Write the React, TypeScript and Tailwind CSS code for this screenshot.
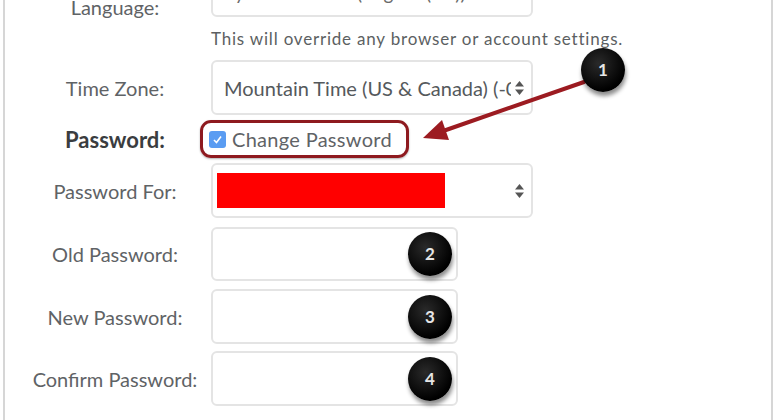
import React from 'react';

// numbered callout badge used on the screenshot
function Callout({ n, className }: { n: number; className: string }) {
  return (
    <div
      className={`absolute flex h-[44px] w-[44px] items-center justify-center rounded-full bg-[radial-gradient(circle_at_40%_35%,#2a2a2a,#000_70%)] text-[17px] font-bold text-[#e6e6e6] shadow-[1px_4px_4px_rgba(0,0,0,0.45)] ${className}`}
    >
      {n}
    </div>
  );
}

function SelectArrows() {
  return (
    <svg width="9" height="14" viewBox="0 0 9 14" className="shrink-0">
      <path d="M4.5 0 L9 5.5 H0 Z" fill="#555" />
      <path d="M4.5 14 L9 8.5 H0 Z" fill="#555" />
    </svg>
  );
}

export default function App() {
  const label = 'ml-[25px] w-[170px] shrink-0 text-center text-[20px] text-[#5f6366]';
  const box = 'ml-[11px] rounded-[6px] border-2 border-[#e4e4e4] bg-white';

  return (
    <div className="relative h-[420px] w-[776px] overflow-hidden bg-white font-['Lato','Noto_Sans',sans-serif]">
      <div className="mx-[3px] flex h-full flex-col border-x-2 border-[#d6d6d6]">
        <div className="-mt-[38px] flex flex-col">
          {/* Language */}
          <div className="flex h-[55px] items-end">
            <div className={`${label} -mb-[5px]`}>Language:</div>
            <div className={`${box} flex h-[55px] w-[322px] items-center overflow-hidden whitespace-nowrap px-[12px] pt-[7px] text-[19px] text-[#6a6a6a]`}>
              System Default (English (US))
            </div>
          </div>

          {/* help text */}
          <div className="mt-[11px] flex h-[22px] items-center">
            <div className="ml-[206px] whitespace-nowrap text-[17px] tracking-[0.8px] text-[#5c5f62]">
              This will override any browser or account settings.
            </div>
          </div>

          {/* Time zone */}
          <div className="mt-[10px] flex h-[55px] items-center">
            <div className={label}>Time Zone:</div>
            <div className={`${box} flex h-[55px] w-[322px] items-center gap-[4px] pl-[11px] pr-[7px]`}>
              <span className="min-w-0 flex-1 overflow-hidden whitespace-nowrap text-[20px] text-[#55595c]">
                Mountain Time (US &amp; Canada) (-07:00)
              </span>
              <SelectArrows />
            </div>
          </div>

          {/* Password */}
          <div className="mt-[5px] flex h-[38px] items-center">
            <div className="ml-[25px] w-[170px] shrink-0 text-center text-[22px] font-bold text-[#3a3d40]">
              Password:
            </div>
            <div className="flex h-[38px] items-center gap-[6px] rounded-[11px] border-[3px] border-[#8e1a1f] pl-[6px] pr-[14px] shadow-[0_1px_2px_rgba(0,0,0,0.3)]">
              <span className="flex h-[17px] w-[17px] items-center justify-center rounded-[3px] bg-[#5a9cf2]">
                <svg width="11" height="11" viewBox="0 0 11 11">
                  <path d="M2 6 L4.5 8.5 L9 2.5" stroke="#fff" strokeWidth="1.6" fill="none" />
                </svg>
              </span>
              <span className="whitespace-nowrap text-[20px] tracking-[0.3px] text-[#5f6366]">Change Password</span>
            </div>
          </div>

          {/* Password for */}
          <div className="mt-[5px] flex h-[55px] items-center">
            <div className={label}>Password For:</div>
            <div className={`${box} flex h-[55px] w-[322px] items-center pl-[4px] pr-[7px]`}>
              <div className="h-[35px] w-[228px] bg-[#ff0000]" />
              <div className="flex-1" />
              <SelectArrows />
            </div>
          </div>

          {/* Old / new / confirm */}
          {[
            { t: 'Old Password:', n: 2, mt: 'mt-[9px]', h: 'h-[54px]' },
            { t: 'New Password:', n: 3, mt: 'mt-[8px]', h: 'h-[55px]' },
            { t: 'Confirm Password:', n: 4, mt: 'mt-[7px]', h: 'h-[55px]' },
          ].map((r) => (
            <div key={r.n} className={`${r.mt} flex ${r.h} items-center`}>
              <div className={label}>{r.t}</div>
              <div className={`${box} relative h-full w-[247px]`}>
                <Callout n={r.n} className="left-[195px] top-1/2 -translate-y-1/2" />
              </div>
            </div>
          ))}
        </div>
      </div>

      {/* callout 1 and its arrow */}
      <svg className="absolute left-0 top-0" width="776" height="420" viewBox="0 0 776 420">
        <line x1="584" y1="82" x2="446" y2="130" stroke="#9c1b21" strokeWidth="4" strokeLinecap="round" />
        <polygon points="423,138 449,140 442,120" fill="#9c1b21" />
      </svg>
      <Callout n={1} className="left-[581px] top-[48px]" />
    </div>
  );
}
